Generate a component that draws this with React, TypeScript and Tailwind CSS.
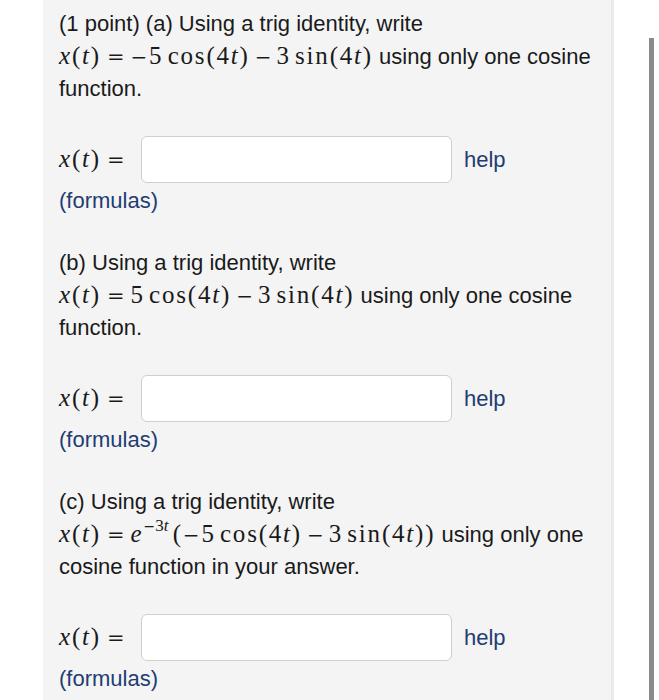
import React from "react";

const M = ({ children }: { children: React.ReactNode }) => (
  <span className="font-['Liberation_Serif',serif] text-[25px] tracking-[1.8px]">{children}</span>
);
const V = ({ children }: { children: React.ReactNode }) => <i>{children}</i>;
// relation / binary operator spacing like MathJax
const Op = ({ c, wide }: { c: string; wide?: boolean }) => (
  <span
    className={
      wide
        ? "mx-[6px] font-['DejaVu_Serif',serif] text-[21px] tracking-normal"
        : "mx-[5px] font-['DejaVu_Serif',serif] text-[20px] tracking-normal"
    }
  >
    {c}
  </span>
);
const Fn = ({ name }: { name: string }) => <span className="ml-[0.17em]">{name}</span>;
const Xt = () => (
  <>
    <V>x</V>(<V>t</V>)
  </>
);

const AnswerRow = () => (
  <div className="mt-[30px]">
    <div className="flex items-center h-[48px]">
      <span className="w-[82px] font-['Liberation_Serif',serif] text-[25px] tracking-[1.8px]">
        <Xt />
        <span className="ml-[6px] font-['DejaVu_Serif',serif] text-[21px]">=</span>
      </span>
      <input
        type="text"
        className="w-[311px] h-[47px] bg-white border border-[#cfcfcf] rounded-[6px] outline-none"
      />
      <span className="ml-[12px] text-[#1f3d73]">help</span>
    </div>
    <div className="mt-[2px] leading-[32px] text-[#1f3d73]">(formulas)</div>
  </div>
);

export default function App() {
  return (
    <div className="w-[659px] h-[700px] bg-white overflow-hidden flex font-['Liberation_Sans',Arial,sans-serif] text-[22px] text-[#1a1a1a]">
      <div className="ml-[43px] w-[571px] bg-[#f4f4f4] border-r-[3px] border-[#ebebeb] pl-[16px] pt-[8px]">
        <div className="leading-[32px]">
          <div>(1 point) (a) Using a trig identity, write</div>
          <div>
            <M>
              <Xt />
              <Op c="=" wide />
              <span className="font-['DejaVu_Serif',serif] text-[20px]">−</span>5<Fn name="cos" />(4<V>t</V>)<Op c="−" />3<Fn name="sin" />(4<V>t</V>)
            </M>{" "}
            using only one cosine
          </div>
          <div>function.</div>
        </div>
        <AnswerRow />

        <div className="mt-[30px] leading-[32px]">
          <div>(b) Using a trig identity, write</div>
          <div>
            <M>
              <Xt />
              <Op c="=" wide />5<Fn name="cos" />(4<V>t</V>)<Op c="−" />3<Fn name="sin" />(4<V>t</V>)
            </M>{" "}
            using only one cosine
          </div>
          <div>function.</div>
        </div>
        <AnswerRow />

        <div className="mt-[30px] leading-[32px]">
          <div>(c) Using a trig identity, write</div>
          <div>
            <M>
              <Xt />
              <Op c="=" wide />
              <V>e</V>
              <span className="inline-block align-top -mt-[2px] leading-[20px] text-[17px] tracking-normal">
                <span className="font-['DejaVu_Serif',serif] text-[14px]">−</span>3<V>t</V>
              </span>
              <span className="ml-[0.17em]">(</span>
              <span className="font-['DejaVu_Serif',serif] text-[20px]">−</span>5<Fn name="cos" />(4<V>t</V>)<Op c="−" />3<Fn name="sin" />(4<V>t</V>))
            </M>{" "}
            using only one
          </div>
          <div>cosine function in your answer.</div>
        </div>
        <AnswerRow />
      </div>
      <div className="ml-[35px] mt-[38px] w-[5px] h-[662px] bg-[#8a8a8a]" />
    </div>
  );
}
